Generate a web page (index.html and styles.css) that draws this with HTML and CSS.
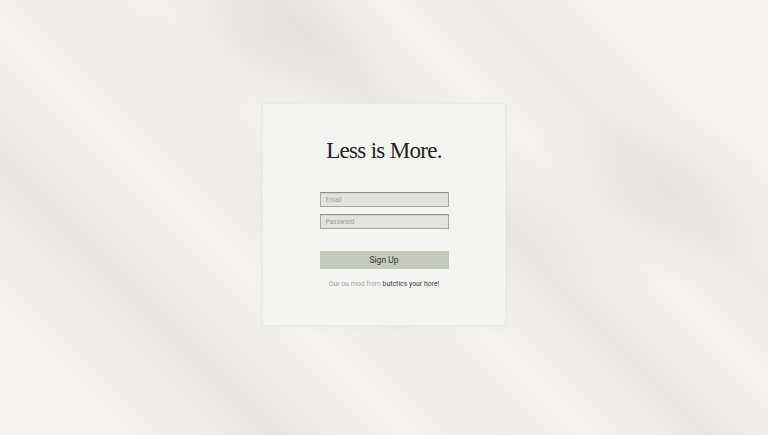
FILE: index.html
```html
<!DOCTYPE html>
<html lang="en">
<head>
<meta charset="utf-8">
<title>Less is More.</title>
<link rel="stylesheet" href="styles.css">
</head>
<body>
<main class="stage">
  <section class="card">
    <h1 class="title">Less is More.</h1>
    <form class="form">
      <input class="field" type="email" placeholder="Email">
      <input class="field" type="password" placeholder="Password">
      <button class="btn" type="button">Sign Up</button>
    </form>
    <p class="note"><span class="muted">Our ou mod from</span> <span class="strong">butctics your hore!</span></p>
  </section>
</main>
</body>
</html>
```
FILE: styles.css
```css
html, body {
  margin: 0;
  padding: 0;
}
body {
  width: 768px;
  height: 435px;
  overflow: hidden;
  background-color: #f4f2ee;
  background-image:
    radial-gradient(ellipse 160px 90px at 640px 200px, rgba(70,70,65,.05), rgba(0,0,0,0)),
    radial-gradient(ellipse 140px 80px at 260px 40px, rgba(70,70,65,.05), rgba(0,0,0,0)),
    linear-gradient(45deg,
      rgba(0,0,0,0) 10%,
      rgba(70,70,65,.075) 23%,
      rgba(0,0,0,0) 34%,
      rgba(70,70,65,.045) 42%,
      rgba(0,0,0,0) 49%,
      rgba(70,70,65,.07) 59%,
      rgba(0,0,0,0) 68%,
      rgba(70,70,65,.055) 76%,
      rgba(0,0,0,0) 86%);
  font-family: Roboto, "Liberation Sans", sans-serif;
}
.stage {
  height: 429px;
  display: flex;
  align-items: center;
  justify-content: center;
}
.card {
  width: 242px;
  height: 221px;
  border: 1px solid #e8e8e5;
  background: rgba(243,243,241,.93);
  box-shadow: 0 1px 4px rgba(0,0,0,.035);
  display: flex;
  flex-direction: column;
  align-items: center;
}
.title {
  margin: 33px 0 0;
  font-family: "Liberation Serif", "Times New Roman", serif;
  font-weight: normal;
  font-size: 23px;
  line-height: 28px;
  letter-spacing: -0.7px;
  color: #232321;
}
.form {
  margin-top: 27px;
  width: 129px;
  display: flex;
  flex-direction: column;
  gap: 7px;
}
.field {
  box-sizing: border-box;
  width: 129px;
  height: 15px;
  margin: 0;
  padding: 0 5px;
  border: 1px solid #a7a8a4;
  border-top-color: #8e8f8c;
  background: #e2e2df;
  box-shadow: inset 0 1px 1px rgba(0,0,0,.07);
  font-family: Roboto, "Liberation Sans", sans-serif;
  font-size: 6.5px;
  color: #555;
  outline: none;
}
.field::placeholder {
  color: #9c9c99;
}
.btn {
  margin-top: 15px;
  width: 129px;
  height: 18px;
  border: 0;
  padding: 0;
  background: #c4c9be;
  font-family: Roboto, "Liberation Sans", sans-serif;
  font-size: 8.5px;
  font-weight: 400;
  color: #383a36;
}
.note {
  margin: 11px 0 0;
  font-size: 6.9px;
  line-height: 9px;
}
.muted {
  color: #a5a5a2;
}
.strong {
  color: #3a3a38;
}
```
